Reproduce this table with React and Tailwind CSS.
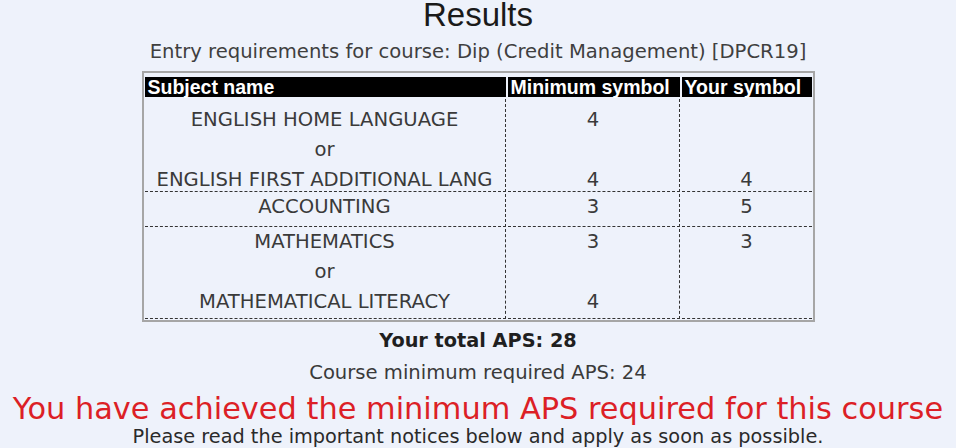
import React from "react";

const body = "font-['DejaVu_Sans',sans-serif]";

function Cell({ lines, className = "" }) {
  return (
    <div className={`text-center leading-[30px] text-[19.6px] text-[#3a3a3a] ${className}`}>
      {lines.map((l, i) => (
        <div key={i} className="h-[30px] whitespace-nowrap">{l || "\u00a0"}</div>
      ))}
    </div>
  );
}

export default function App() {
  const rows = [
    {
      h: "h-[93px] pt-[6px]",
      shift: "",
      cells: [["ENGLISH HOME LANGUAGE", "or", "ENGLISH FIRST ADDITIONAL LANG"], ["4", "", "4"], ["", "", "4"]],
    },
    { h: "h-[33px]", shift: "mt-[-2px]", cells: [["ACCOUNTING"], ["3"], ["5"]] },
    {
      h: "h-[90px]",
      shift: "mt-[-2px]",
      cells: [["MATHEMATICS", "or", "MATHEMATICAL LITERACY"], ["3", "", "4"], ["3", "", ""]],
    },
  ];
  return (
    <div className={`min-h-[448px] w-full bg-[#eef2fb] flex flex-col items-center overflow-hidden ${body}`}>
      <h1 className="font-['Liberation_Sans',Arial,sans-serif] text-[33px] leading-[27px] pt-[1px] text-[#1a1a1a] h-[40px]">
        Results
      </h1>
      <p className="text-[19.6px] leading-[24px] text-[#3f3f3f]">
        Entry requirements for course: Dip (Credit Management) [DPCR19]
      </p>
      <div className="mt-[7px] border-2 border-[#a6a6a6] px-[1px] pt-[4px] pb-[1px]">
        <div className="grid grid-cols-[361px_172px_130px] gap-x-[2px] gap-y-[2px]">
          {["Subject name", "Minimum symbol", "Your symbol"].map((t) => (
            <div
              key={t}
              className="bg-black text-white font-['Liberation_Sans',Arial,sans-serif] font-bold text-[19.5px] leading-[20px] h-[20px] pl-[3px] whitespace-nowrap"
            >
              {t}
            </div>
          ))}
          {rows.map((r, ri) =>
            r.cells.map((c, ci) => (
              <div
                key={`${ri}-${ci}`}
                className={`${r.h} border-b border-dashed border-[#333] ${ci < 2 ? "border-r" : ""}`}
              >
                <Cell lines={c} className={r.shift} />
              </div>
            ))
          )}
        </div>
      </div>
      <p className="mt-[3px] leading-[32px] text-[19.3px] font-bold text-[#1f1f1f]">Your total APS: 28</p>
      <p className="leading-[32px] text-[19.6px] text-[#3a3a3a]">Course minimum required APS: 24</p>
      <p className="mt-[1px] leading-[38px] text-[30.4px] text-[#dc1f26] whitespace-nowrap">
        You have achieved the minimum APS required for this course
      </p>
      <p className="leading-[18px] text-[19.3px] text-[#2a2a2a] whitespace-nowrap">
        Please read the important notices below and apply as soon as possible.
      </p>
    </div>
  );
}
